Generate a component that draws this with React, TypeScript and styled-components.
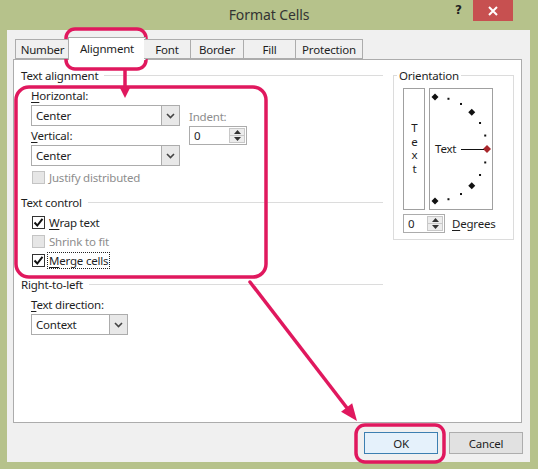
import React from "react";
import styled, { createGlobalStyle } from "styled-components";

const PINK = "#e0185e";

const GlobalStyle = createGlobalStyle`
  html, body {
    margin: 0;
    padding: 0;
    background: #b6c28b;
  }
  body {
    font-family: "Noto Sans", "Open Sans", sans-serif;
    font-size: 11.5px;
    letter-spacing: -0.2px;
    color: #1e1e1e;
  }
`;

const Window = styled.div`
  position: relative;
  width: 538px;
  height: 469px;
  background: #b6c28b;
  overflow: hidden;
`;

const TitleBar = styled.div`
  height: 30px;
  display: grid;
  grid-template-columns: 1fr auto 1fr;
  align-items: start;
`;

const Title = styled.div`
  grid-column: 2;
  padding-top: 5px;
  font-size: 14px;
  letter-spacing: -0.1px;
  color: #333;
  line-height: 20px;
`;

const Controls = styled.div`
  grid-column: 3;
  justify-self: end;
  display: flex;
  align-items: flex-start;
  margin-right: 25px;
`;

const HelpBtn = styled.div`
  width: 15px;
  margin-right: 7px;
  padding-top: 3px;
  text-align: center;
  font-family: "DejaVu Sans", sans-serif;
  font-weight: bold;
  font-size: 12px;
  color: #222;
`;

const CloseBtn = styled.div`
  width: 40px;
  height: 21px;
  background: #c75050;
  display: flex;
  align-items: center;
  justify-content: center;
`;

const Dialog = styled.div`
  margin: 0 8px 0 7px;
  height: 432px;
  box-sizing: border-box;
  background: #f0f0f0;
  padding: 9px 8px 0 6px;
  display: flex;
  flex-direction: column;
`;

const TabStrip = styled.div`
  height: 20px;
  display: flex;
  align-items: flex-end;
  padding-left: 2px;
  position: relative;
  z-index: 1;
`;

const Tab = styled.div<{ $active?: boolean; $w: number }>`
  box-sizing: border-box;
  width: ${(p) => p.$w}px;
  height: ${(p) => (p.$active ? 23 : 20)}px;
  margin: ${(p) => (p.$active ? "0 -2px -1px -2px" : "0")};
  border: 1px solid #acacac;
  border-left-width: ${(p) => (p.$active ? 1 : 0)}px;
  border-bottom: ${(p) => (p.$active ? "none" : "1px solid #acacac")};
  background: ${(p) => (p.$active ? "#fff" : "#f0f0f0")};
  display: flex;
  align-items: ${(p) => (p.$active ? "flex-start" : "center")};
  padding-top: ${(p) => (p.$active ? 3 : 0)}px;
  justify-content: center;
  line-height: 15px;
  &:first-child {
    border-left-width: 1px;
  }
`;

const Panel = styled.div`
  height: 364px;
  box-sizing: border-box;
  border: 1px solid #acacac;
  background: #fff;
  padding: 8px 7px;
  display: flex;
  gap: 10px;
  align-items: flex-start;
`;

const LeftCol = styled.div`
  width: 362px;
  display: flex;
  flex-direction: column;
`;

const SectionHead = styled.div<{ $mt?: number }>`
  display: flex;
  align-items: center;
  line-height: 15px;
  margin-top: ${(p) => p.$mt ?? 0}px;
  &::after {
    content: "";
    flex: 1;
    border-top: 1px solid #dcdcdc;
    margin-left: 6px;
  }
`;

const SectionBody = styled.div<{ $pt?: number }>`
  padding-left: 10px;
  padding-top: ${(p) => p.$pt ?? 0}px;
  display: flex;
  flex-direction: column;
`;

const FieldRow = styled.div`
  display: flex;
  gap: 9px;
  margin-top: 5px;
`;

const FieldCol = styled.div<{ $pt?: number }>`
  display: flex;
  flex-direction: column;
  padding-top: ${(p) => p.$pt ?? 0}px;
`;

const Label = styled.div<{ $disabled?: boolean; $mt?: number }>`
  line-height: 15px;
  margin-top: ${(p) => p.$mt ?? 0}px;
  margin-bottom: 2px;
  color: ${(p) => (p.$disabled ? "#8d8d8d" : "#1e1e1e")};
`;

const Accel = styled.span`
  text-decoration: underline;
  text-underline-offset: 2px;
`;

const ComboBox = styled.div<{ $w: number }>`
  box-sizing: border-box;
  width: ${(p) => p.$w}px;
  height: 21px;
  border: 1px solid #acacac;
  background: #fff;
  display: flex;
`;

const ComboValue = styled.div`
  flex: 1;
  padding-left: 4px;
  line-height: 19px;
`;

const ComboArrow = styled.div`
  width: 17px;
  border-left: 1px solid #acacac;
  background: #e8e8e8;
  display: flex;
  align-items: center;
  justify-content: center;
`;

const Spinner = styled.div<{ $w: number }>`
  box-sizing: border-box;
  width: ${(p) => p.$w}px;
  height: 19px;
  border: 1px solid #acacac;
  background: #fff;
  display: flex;
`;

const SpinValue = styled.div`
  flex: 1;
  padding-left: 4px;
  line-height: 17px;
`;

const SpinButtons = styled.div`
  width: 14px;
  margin: 1px;
  display: flex;
  flex-direction: column;
  border: 1px solid #c8c8c8;
  background: #ececec;
  & > div {
    flex: 1;
    display: flex;
    align-items: center;
    justify-content: center;
  }
  & > div + div {
    border-top: 1px solid #c8c8c8;
  }
`;

const CheckRow = styled.div<{ $mt?: number }>`
  height: 19px;
  display: flex;
  align-items: center;
  margin-top: ${(p) => p.$mt ?? 0}px;
`;

const CheckBox = styled.div<{ $disabled?: boolean }>`
  box-sizing: border-box;
  width: 13px;
  height: 13px;
  border: 1px solid ${(p) => (p.$disabled ? "#c4c4c4" : "#333")};
  background: ${(p) => (p.$disabled ? "#e6e6e6" : "#fff")};
  margin-left: 1px;
  margin-right: 3px;
  display: flex;
  align-items: center;
  justify-content: center;
`;

const CheckLabel = styled.span<{ $disabled?: boolean; $focus?: boolean }>`
  line-height: 15px;
  padding: 0 1px;
  color: ${(p) => (p.$disabled ? "#8d8d8d" : "#1e1e1e")};
  outline: ${(p) => (p.$focus ? "1px dotted #222" : "none")};
`;

const OrientationGroup = styled.fieldset`
  margin: 0;
  width: 121px;
  box-sizing: border-box;
  border: 1px solid #dcdcdc;
  padding: 0 8px 6px 9px;
  min-width: 0;
  & > legend {
    margin-left: -6px;
    padding: 0 2px;
    line-height: 15px;
  }
`;

const OrientBoxes = styled.div`
  margin-top: 5px;
  display: flex;
  gap: 4px;
`;

const VerticalTextBox = styled.div`
  box-sizing: border-box;
  width: 22px;
  height: 122px;
  border: 1px solid #a0a0a0;
  display: flex;
  align-items: center;
  justify-content: center;
  padding-bottom: 4px;
`;

const VText = styled.span`
  writing-mode: vertical-rl;
  text-orientation: upright;
  letter-spacing: -1.5px;
  line-height: 14px;
`;

const DialBox = styled.div`
  box-sizing: border-box;
  width: 64px;
  height: 122px;
  border: 1px solid #a0a0a0;
`;

const DegreesRow = styled.div`
  margin-top: 4px;
  display: flex;
  align-items: center;
  gap: 7px;
`;

const ButtonRow = styled.div`
  margin-top: 9px;
  margin-right: -1px;
  display: flex;
  justify-content: flex-end;
  gap: 11px;
`;

const Button = styled.div<{ $default?: boolean }>`
  box-sizing: border-box;
  width: 74px;
  height: 22px;
  border: 1px solid ${(p) => (p.$default ? "#3c7fb1" : "#adadad")};
  background: ${(p) => (p.$default ? "#e5f1fb" : "#e1e1e1")};
  display: flex;
  align-items: center;
  justify-content: center;
  line-height: 15px;
`;

const Annotations = styled.svg`
  position: absolute;
  left: 0;
  top: 0;
  pointer-events: none;
`;

const Chevron = () => (
  <svg width="9" height="6" viewBox="0 0 9 6">
    <path d="M1 1 L4.5 4.5 L8 1" fill="none" stroke="#444" strokeWidth="1.6" />
  </svg>
);

const Tick = () => (
  <svg width="11" height="11" viewBox="0 0 11 11">
    <path d="M1.5 5.5 L4.3 8.5 L9.5 1.8" fill="none" stroke="#111" strokeWidth="2" />
  </svg>
);

const SpinArrows = () => (
  <SpinButtons>
    <div>
      <svg width="7" height="4" viewBox="0 0 7 4">
        <path d="M0 4 L3.5 0 L7 4 Z" fill="#333" />
      </svg>
    </div>
    <div>
      <svg width="7" height="4" viewBox="0 0 7 4">
        <path d="M0 0 L3.5 4 L7 0 Z" fill="#333" />
      </svg>
    </div>
  </SpinButtons>
);

const Combo: React.FC<{ value: string; width: number }> = ({ value, width }) => (
  <ComboBox $w={width}>
    <ComboValue>{value}</ComboValue>
    <ComboArrow>
      <Chevron />
    </ComboArrow>
  </ComboBox>
);

const Check: React.FC<{
  checked?: boolean;
  disabled?: boolean;
  focus?: boolean;
  children: React.ReactNode;
}> = ({ checked, disabled, focus, children }) => (
  <CheckRow>
    <CheckBox $disabled={disabled}>{checked && <Tick />}</CheckBox>
    <CheckLabel $disabled={disabled} $focus={focus}>
      {children}
    </CheckLabel>
  </CheckRow>
);

// dial: centre sits at the left edge, radius 52
const Dial = () => {
  const cx = 6;
  const cy = 61;
  const r = 52;
  const marks = [90, 75, 60, 45, 30, 15, 0, -15, -30, -45, -60, -75, -90];
  return (
    <svg width="62" height="120" viewBox="0 0 62 120">
      {marks.map((a) => {
        const rad = (a * Math.PI) / 180;
        const x = cx + r * Math.cos(rad) - 1;
        const y = cy - r * Math.sin(rad) - 1;
        if (a === 0) {
          return (
            <path
              key={a}
              d={`M${x - 4} ${y} L${x} ${y - 4} L${x + 4} ${y} L${x} ${y + 4} Z`}
              fill="#a8262b"
            />
          );
        }
        if (a % 45 === 0) {
          return (
            <path
              key={a}
              d={`M${x - 3.5} ${y} L${x} ${y - 3.5} L${x + 3.5} ${y} L${x} ${y + 3.5} Z`}
              fill="#111"
            />
          );
        }
        return <rect key={a} x={x - 1} y={y - 1} width="2" height="2" fill="#111" />;
      })}
      <text x="5" y="64" fontSize="11.5" fontFamily="Noto Sans, sans-serif" fill="#1e1e1e">
        Text
      </text>
      <line x1="31" y1="60.5" x2="54" y2="60.5" stroke="#111" strokeWidth="1" />
    </svg>
  );
};

const tabs = [
  { name: "Number", w: 55 },
  { name: "Alignment", w: 78, active: true },
  { name: "Font", w: 47 },
  { name: "Border", w: 53 },
  { name: "Fill", w: 52 },
  { name: "Protection", w: 67 },
];

// second arrow: from the group outline down to the OK button
const ax1 = 250;
const ay1 = 282;
const ax2 = 357;
const ay2 = 421;
const alen = Math.hypot(ax2 - ax1, ay2 - ay1);
const ux = (ax2 - ax1) / alen;
const uy = (ay2 - ay1) / alen;
const bx = ax2 - ux * 17;
const by = ay2 - uy * 17;
const headPath = `M${ax2} ${ay2} L${bx - uy * 7} ${by + ux * 7} L${bx + uy * 7} ${by - ux * 7} Z`;

export default function App() {
  return (
    <Window>
      <GlobalStyle />
      <TitleBar>
        <Title>Format Cells</Title>
        <Controls>
          <HelpBtn>?</HelpBtn>
          <CloseBtn>
            <svg width="10" height="10" viewBox="0 0 10 10">
              <path d="M1 1 L9 9 M9 1 L1 9" stroke="#fff" strokeWidth="2" />
            </svg>
          </CloseBtn>
        </Controls>
      </TitleBar>

      <Dialog>
        <TabStrip>
          {tabs.map((t) => (
            <Tab key={t.name} $w={t.w} $active={t.active}>
              {t.name}
            </Tab>
          ))}
        </TabStrip>

        <Panel>
          <LeftCol>
            <SectionHead>Text alignment</SectionHead>
            <SectionBody>
              <FieldRow>
                <FieldCol>
                  <Label>
                    <Accel>H</Accel>orizontal:
                  </Label>
                  <Combo value="Center" width={149} />
                  <Label $mt={2}>
                    <Accel>V</Accel>ertical:
                  </Label>
                  <Combo value="Center" width={149} />
                </FieldCol>
                <FieldCol $pt={21}>
                  <Label $disabled>Indent:</Label>
                  <Spinner $w={58}>
                    <SpinValue>0</SpinValue>
                    <SpinArrows />
                  </Spinner>
                </FieldCol>
              </FieldRow>
              <CheckRow $mt={2}>
                <CheckBox $disabled />
                <CheckLabel $disabled>Justify distributed</CheckLabel>
              </CheckRow>
            </SectionBody>

            <SectionHead $mt={8}>Text control</SectionHead>
            <SectionBody $pt={3}>
              <Check checked>
                <Accel>W</Accel>rap text
              </Check>
              <Check disabled>Shrink to fit</Check>
              <Check checked focus>
                <Accel>M</Accel>erge cells
              </Check>
            </SectionBody>

            <SectionHead $mt={7}>Right-to-left</SectionHead>
            <SectionBody>
              <Label $mt={5}>
                <Accel>T</Accel>ext direction:
              </Label>
              <Combo value="Context" width={97} />
            </SectionBody>
          </LeftCol>

          <OrientationGroup>
            <legend>Orientation</legend>
            <OrientBoxes>
              <VerticalTextBox>
                <VText>Text</VText>
              </VerticalTextBox>
              <DialBox>
                <Dial />
              </DialBox>
            </OrientBoxes>
            <DegreesRow>
              <Spinner $w={42}>
                <SpinValue>0</SpinValue>
                <SpinArrows />
              </Spinner>
              <span>
                <Accel>D</Accel>egrees
              </span>
            </DegreesRow>
          </OrientationGroup>
        </Panel>

        <ButtonRow>
          <Button $default>OK</Button>
          <Button>Cancel</Button>
        </ButtonRow>
      </Dialog>

      {/* tutorial highlights drawn over the dialog */}
      <Annotations width="538" height="469" viewBox="0 0 538 469">
        <g fill="none" stroke={PINK} strokeWidth="3.5">
          <rect x="66" y="29" width="80" height="40" rx="9" />
          <rect x="16" y="87" width="250" height="190" rx="13" />
          <rect x="356" y="425" width="88" height="37" rx="9" />
          <line x1="125" y1="69" x2="125" y2="88" />
          <line x1={ax1} y1={ay1} x2={bx} y2={by} strokeLinecap="round" />
        </g>
        <path d="M120 88 L130 88 L125 98 Z" fill={PINK} />
        <path d={headPath} fill={PINK} />
      </Annotations>
    </Window>
  );
}
